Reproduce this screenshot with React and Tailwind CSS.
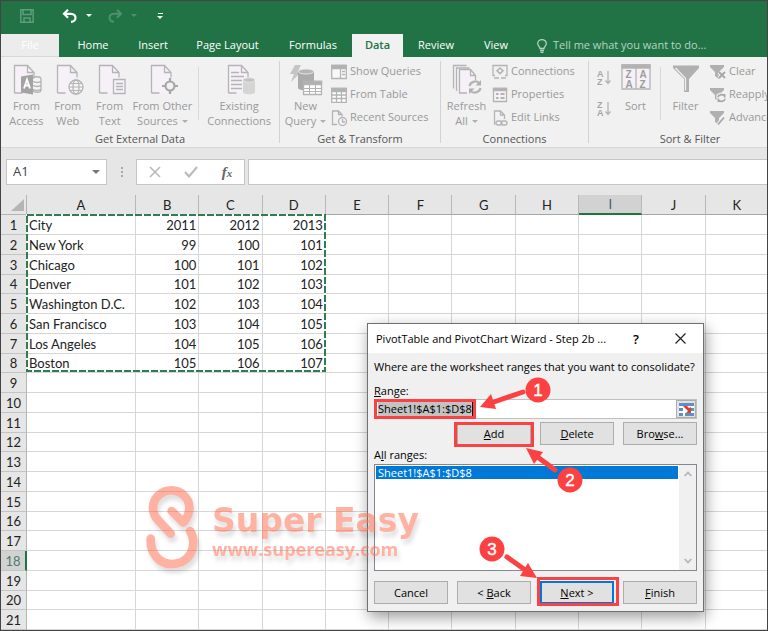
import React from 'react';

const columns = ['A', 'B', 'C', 'D', 'E', 'F', 'G', 'H', 'I', 'J', 'K'];

const data = [
    ['City', 2011, 2012, 2013],
    ['New York', 99, 100, 101],
    ['Chicago', 100, 101, 102],
    ['Denver', 101, 102, 103],
    ['Washington D.C.', 102, 103, 104],
    ['San Francisco', 103, 104, 105],
    ['Los Angeles', 104, 105, 106],
    ['Boston', 105, 106, 107],
];

const ROW_COUNT = 21;
const ACTIVE_COLUMN = 'I';
const ACTIVE_ROW = 18;

const tabs = [
    { name: 'Home', width: 'w-16' },
    { name: 'Insert', width: 'w-14' },
    { name: 'Page Layout', width: 'w-[93px]' },
    { name: 'Formulas', width: 'w-[78px]' },
    { name: 'Data', width: 'w-[51px]' },
    { name: 'Review', width: 'w-[66px]' },
    { name: 'View', width: 'w-[54px]' },
];

/* ---------- icons ---------- */

const Icon = ({ w, h, children }) => (
    <svg width={w} height={h} viewBox={`0 0 ${w} ${h}`} fill="none" stroke="#b4b4b4" strokeWidth="1.3" className="shrink-0" aria-hidden="true">
        {children}
    </svg>
);

const Page = () => (
    <>
        <path d="M1.5 1.5h13l6.500 7v20.500h-19.500z" fill="#f6f1f8" stroke="none" />
        <path d="M1.500 29v-27.500h13l6.500 7v5M14.500 1.500v7h6.500M1.500 29h8" />
    </>
);

const AccessIcon = () => (
    <Icon w={30} h={31}>
        <Page />
        <path d="M20 15c0-3 8-3 8 0v11c0 3-8 3-8 0M20 17c1 2 7 2 8 0M20 21c1 2 7 2 8 0M20 25c1 2 7 2 8 0" fill="#f4f4f4" />
        <path d="M8 12.500l12-2v20l-12-2z" fill="#a3a3a3" stroke="none" />
        <path d="M11 24.500l3-9 3 9M12 21.500h4" stroke="#fff" strokeWidth="1.800" />
    </Icon>
);

const WebIcon = () => (
    <Icon w={28} h={31}>
        <Page />
        <circle cx="20" cy="23" r="7" fill="#f4f4f4" />
        <ellipse cx="20" cy="23" rx="3" ry="7" />
        <path d="M13 23h14M14 19.500h12M14 26.500h12" strokeWidth="1" />
    </Icon>
);

const TextIcon = () => (
    <Icon w={28} h={31}>
        <Page />
        <path d="M15.500 15.500h11.500v14h-11.500z" fill="#f6f1f8" />
        <path d="M18 19.500h7M18 22.500h7M18 25.500h7" />
    </Icon>
);

const OtherIcon = () => (
    <Icon w={28} h={31}>
        <Page />
        <circle cx="20" cy="22" r="4.500" fill="#f1f1f1" stroke="#a6a6a6" strokeWidth="2.200" />
        <path d="M20 14v4M20 26v4M12 22h4M24 22h4" stroke="#a6a6a6" strokeWidth="2.200" />
    </Icon>
);

const ExistingIcon = () => (
    <Icon w={28} h={31}>
        <Page />
        <path d="M4 8.500h8M4 12.500h13M4 16.500h11M4 20.500h11M4 24.500h11" />
        <path d="M16 16v12c0 3 12 3 12 0v-12c0-3-12-3-12 0z" fill="#d5d5d5" stroke="none" />
        <ellipse cx="22" cy="16" rx="6" ry="2.200" fill="#c3c3c3" stroke="#f1f1f1" strokeWidth=".6" />
    </Icon>
);

const QueryIcon = () => (
    <Icon w={34} h={34}>
        <path d="M6 1h6l-3 6h4l-11 11 3-8h-4z" fill="#c4c4c4" stroke="none" />
        <path d="M9 8v16c0 3 16 3 16 0v-16c0-4-16-4-16 0z" fill="#ababab" stroke="none" />
        <ellipse cx="17" cy="7.500" rx="7.500" ry="2.500" fill="#b5b5b5" stroke="#f1f1f1" strokeWidth=".8" />
        <path d="M14.500 17.500h18v13h-18z" fill="#fff" />
        <path d="M14.500 17.500h18v3h-18z" fill="#b0b0b0" />
        <path d="M14.500 24.500h18M20.500 20v10M26.500 20v10M14.500 27.500h18" strokeWidth="1" />
    </Icon>
);

const RefreshIcon = () => (
    <Icon w={30} h={32}>
        <path d="M1.500 24.500v-23h13M4.500 27v-23h13" />
        <path d="M7.500 5.500h11l6 6v17h-17z" fill="#f6f1f8" stroke="none" />
        <path d="M15 29h-7.500v-23.500h11l5 6v5M18.500 5.500v6h5" />
        <circle cx="23" cy="23" r="7" fill="#f1f1f1" stroke="none" />
        <path d="M17.500 22c1-5 8-6 10-2.500M28.500 24c-1 5-8 6-10 2.500" strokeWidth="2.200" />
        <path d="M29 16v5.500h-5.500zM17 30v-5.500h5.500z" fill="#b0b0b0" stroke="none" />
    </Icon>
);

const SortIcon = () => (
    <Icon w={30} h={26}>
        <path d="M1 1h28v24h-28z" fill="#f6f1f8" />
        <path d="M1 1h28v3h-28zM15 4v21" fill="#b0b0b0" />
        <g fill="#9d9d9d" stroke="none" className="font-['Liberation_Sans'] text-[10px] font-bold">
            <text x="4.500" y="14">Z</text>
            <text x="4.500" y="24">A</text>
            <text x="18.500" y="14">A</text>
            <text x="18.500" y="24">Z</text>
        </g>
    </Icon>
);

const SortOrderIcon = ({ first, second }) => (
    <Icon w={14} h={18}>
        <g fill="#a6a6a6" stroke="none" className="font-['Liberation_Sans'] text-[9px] font-bold">
            <text x="0" y="8">{first}</text>
            <text x="0" y="16">{second}</text>
        </g>
        <path d="M11 2v12M8.500 11.500l2.500 3 2.500-3" />
    </Icon>
);

const FilterIcon = () => (
    <Icon w={28} h={30}>
        <path d="M1 1.500h26v2.500l-10 11v13h-5v-13l-11-11z" fill="#b0b0b0" stroke="none" />
        <path d="M3.500 4l10 10.500v12" stroke="#f1f1f1" />
    </Icon>
);

const SmallFilterIcon = ({ children }) => (
    <Icon w={16} h={16}>
        <path d="M0 1h14v2l-5 5v7l-4-3v-4l-5-5z" fill="#b0b0b0" stroke="none" />
        <g stroke="#f1f1f1" strokeWidth="4">{children}</g>
        <g stroke="#a6a6a6" strokeWidth="1.800">{children}</g>
    </Icon>
);

const ShowQueriesIcon = () => (
    <Icon w={16} h={16}>
        <path d="M.7 1.500h14.600v13h-14.600z" fill="#f8f8f8" />
        <path d="M.7 1.500h14.600v3h-14.600z" fill="#b0b0b0" />
        <path d="M9.500 5v9M11 7.500h3M11 10.500h3" />
    </Icon>
);

const TableIcon = () => (
    <Icon w={16} h={16}>
        <path d="M.7 1.500h14.600v14h-14.600z" fill="#fff" />
        <path d="M.7 1.500h14.600v3h-14.600z" fill="#b0b0b0" />
        <path d="M1 8h14M1 11.500h14M5.500 4v11M10.500 4v11" />
    </Icon>
);

const RecentIcon = () => (
    <Icon w={16} h={16}>
        <path d="M6 14.500h-4.500v-13.500h6l3.500 3.500v2M7.500 1v3.500h3.500" />
        <circle cx="11.500" cy="11.500" r="4" fill="#f6f1f8" />
        <path d="M11.500 9v3h2.500" />
    </Icon>
);

const ConnectionsIcon = () => (
    <Icon w={16} h={16}>
        <path d="M3 11.500h-2v-10h14v10h-2M2 14h5M9 14h5" />
        <path d="M8 4l3 2.800-3 2.800-3-2.800z" strokeWidth="1.600" />
    </Icon>
);

const PropertiesIcon = () => (
    <Icon w={16} h={16}>
        <path d="M1.500 1.500h13v13h-13z" fill="#f6f1f8" />
        <path d="M1.500 1.500h13v2h-13z" fill="#b0b0b0" />
        <path d="M4 7h2.500M4 11h2.500M8.500 7h4M8.500 11h4" strokeWidth="1.800" />
    </Icon>
);

const LinksIcon = () => (
    <Icon w={16} h={16}>
        <path d="M3.500 14h-1v-13h6l4 4v4M8.500 1v4h4" />
        <rect x="4" y="11" width="6" height="4" rx="2" />
        <rect x="9" y="11" width="6" height="4" rx="2" />
    </Icon>
);

const Caret = () => <span className="ml-1 mb-0.5 inline-block border-x-[3px] border-t-[3px] border-x-transparent border-t-[#b0b0b0]" />;

/* ---------- ribbon ---------- */

const BigButton = ({ icon, lines, width, caret }) => (
    <button className={`flex flex-col items-center pt-1 whitespace-nowrap leading-[15px] ${width}`}>
        <span className="flex h-[37px] items-start justify-center pt-[3px]">{icon}</span>
        {lines.map((line, i) => (
            <span key={line}>
                {line}
                {caret && i === lines.length - 1 && <Caret />}
            </span>
        ))}
    </button>
);

const SmallButton = ({ icon, children }) => (
    <button className="flex h-[23px] items-center gap-[3px] whitespace-nowrap">
        {icon}
        {children}
    </button>
);

const Group = ({ title, width, children }) => (
    <section className={`flex shrink-0 flex-col ${width}`}>
        <div className="flex h-[75px]">{children}</div>
        <h2 className="h-4 text-center leading-4 text-[#555]">{title}</h2>
    </section>
);

const GroupDivider = () => <div className="mt-1 mb-1 w-px shrink-0 bg-[#d2d2d2]" />;
const Divider = () => <div className="mt-2.5 mb-[11px] w-px shrink-0 bg-[#d9d9d9]" />;

const TitleBar = () => (
    <header className="flex h-[33px] items-center bg-[#217346] pb-1 pl-[19px]">
        <button aria-label="Save">
            <svg width="14" height="14" viewBox="0 0 14 14" fill="none" stroke="#5f9c7b" strokeWidth="1.500">
                <path d="M.8.8h12.400v12.400h-12.400zM3 1v4.500h8v-4.500M4 13v-4h6v4" />
            </svg>
        </button>
        <button aria-label="Undo" className="ml-7">
            <svg width="16" height="14" viewBox="0 0 16 14" fill="none" stroke="#fff" strokeWidth="2.200">
                <path d="M6 .8l-4 4 4 4M2 4.800h7c6 0 6 8 0 8" />
            </svg>
        </button>
        <span className="ml-2 border-x-[3px] border-t-[3px] border-x-transparent border-t-white" />
        <button aria-label="Redo" className="ml-[15px]">
            <svg width="16" height="14" viewBox="0 0 16 14" fill="none" stroke="#4f9070" strokeWidth="2">
                <path d="M10 .8l4 4-4 4M14 4.800h-7c-6 0-6 8 0 8" />
            </svg>
        </button>
        <span className="ml-2 border-x-[3px] border-t-[3px] border-x-transparent border-t-[#4f9070]" />
        <button aria-label="Customize" className="ml-5 flex flex-col items-center gap-0.5">
            <span className="h-px w-[5px] bg-white" />
            <span className="border-x-[3px] border-t-[3px] border-x-transparent border-t-white" />
        </button>
    </header>
);

const TabStrip = () => (
    <nav className="flex h-[23px] bg-[#217346] text-[11px] font-medium text-white">
        <button className="mr-0.5 w-[58px] shrink-0 border-b border-[#d8d8d8] bg-[#ececec]">File</button>
        {tabs.map((tab) => (
            <button
                key={tab.name}
                className={`shrink-0 whitespace-nowrap ${tab.width} ${tab.name === 'Data' ? 'bg-[#f1f1f1] font-semibold text-[#217346]' : ''}`}
            >
                {tab.name}
            </button>
        ))}
        <button className="ml-3.5 flex items-center gap-1.5 whitespace-nowrap text-[#b5d3c2]">
            <svg width="10" height="14" viewBox="0 0 10 14" fill="none" stroke="#b5d3c2" strokeWidth="1.300">
                <path d="M3 9.500c0-2-2.300-2.500-2.300-5a4.300 3.800 0 0 1 8.600 0c0 2.500-2.300 3-2.300 5zM3 11.500h4M3.500 13.300h3" />
            </svg>
            Tell me what you want to do...
        </button>
    </nav>
);

const Ribbon = () => (
    <div className="flex h-[91px] overflow-hidden border-b border-[#d8d8d8] bg-[#f1f1f1] text-[11px] font-medium text-[#999]">
        <Group title="Get External Data" width="w-[278px] [&_svg]:ml-1">
            <BigButton icon={<AccessIcon />} lines={['From', 'Access']} width="ml-[5px] w-[41px]" />
            <BigButton icon={<WebIcon />} lines={['From', 'Web']} width="w-[42px]" />
            <BigButton icon={<TextIcon />} lines={['From', 'Text']} width="w-[42px]" />
            <BigButton icon={<OtherIcon />} lines={['From Other', 'Sources']} width="w-16" caret />
            <div className="w-1" />
            <Divider />
            <BigButton icon={<ExistingIcon />} lines={['Existing', 'Connections']} width="w-20" />
        </Group>
        <GroupDivider />
        <Group title="Get & Transform" width="w-40">
            <BigButton icon={<QueryIcon />} lines={['New', 'Query']} width="w-[51px]" caret />
            <div className="pt-[3px]">
                <SmallButton icon={<ShowQueriesIcon />}>Show Queries</SmallButton>
                <SmallButton icon={<TableIcon />}>From Table</SmallButton>
                <SmallButton icon={<RecentIcon />}>Recent Sources</SmallButton>
            </div>
        </Group>
        <GroupDivider />
        <Group title="Connections" width="w-[147px]">
            <BigButton icon={<RefreshIcon />} lines={['Refresh', 'All']} width="w-[51px]" caret />
            <div className="pt-[3px]">
                <SmallButton icon={<ConnectionsIcon />}>Connections</SmallButton>
                <SmallButton icon={<PropertiesIcon />}>Properties</SmallButton>
                <SmallButton icon={<LinksIcon />}>Edit Links</SmallButton>
            </div>
        </Group>
        <GroupDivider />
        <Group title="Sort & Filter" width="w-[202px]">
            <div className="ml-2 flex flex-col gap-[13px] pt-3">
                <button aria-label="Sort A to Z"><SortOrderIcon first="A" second="Z" /></button>
                <button aria-label="Sort Z to A"><SortOrderIcon first="Z" second="A" /></button>
            </div>
            <BigButton icon={<SortIcon />} lines={['Sort']} width="w-[49px]" />
            <Divider />
            <BigButton icon={<FilterIcon />} lines={['Filter']} width="w-[49px]" />
            <div className="pt-[3px]">
                <SmallButton icon={<SmallFilterIcon><path d="M9 8l6 6M15 8l-6 6" /></SmallFilterIcon>}>Clear</SmallButton>
                <SmallButton icon={<SmallFilterIcon><path d="M8 10c1-3 5-3 6.500-1v-2M15 12c-1 3-5 3-6.500 1v2" /></SmallFilterIcon>}>Reapply</SmallButton>
                <SmallButton icon={<SmallFilterIcon><path d="M8 14.500l6-7" /></SmallFilterIcon>}>Advanced</SmallButton>
            </div>
        </Group>
    </div>
);

const FormulaBar = () => (
    <div className="flex h-[47px] items-start bg-[#e6e6e6] pt-[11px] pl-[5px]">
        <div className="flex h-[26px] w-[101px] items-center border border-[#c6c6c6] bg-white">
            <input aria-label="Name box" defaultValue="A1" className="w-[85px] pl-1.5 text-[13px] text-[#444] outline-none" />
            <button aria-label="Open name list" className="border-x-4 border-t-4 border-x-transparent border-t-[#777]" />
        </div>
        <div className="flex h-[26px] w-[29px] flex-col items-center justify-center gap-0.5">
            <span className="size-0.5 bg-[#a8a8a8]" />
            <span className="size-0.5 bg-[#a8a8a8]" />
            <span className="size-0.5 bg-[#a8a8a8]" />
        </div>
        <div className="flex h-[26px] w-[109px] items-center justify-around border border-[#c6c6c6] bg-white">
            <button aria-label="Cancel">
                <svg width="12" height="12" viewBox="0 0 12 12" stroke="#b9b9b9" strokeWidth="1.600"><path d="M1 1l10 10M11 1l-10 10" /></svg>
            </button>
            <button aria-label="Enter">
                <svg width="14" height="12" viewBox="0 0 14 12" fill="none" stroke="#b9b9b9" strokeWidth="2"><path d="M1 6l4 4.500 8-9.500" /></svg>
            </button>
            <button aria-label="Insert function" className="font-['Liberation_Serif'] text-[15px] leading-4 font-bold text-[#666] italic">
                f<span className="text-[11px]">x</span>
            </button>
        </div>
        <input aria-label="Formula" className="ml-[3px] h-[26px] min-w-0 flex-1 border border-r-0 border-[#c6c6c6] bg-white outline-none" />
    </div>
);

/* ---------- sheet ---------- */

const Sheet = () => (
    <div className="relative">
        {/* the last column runs under the window edge */}
        <table className="w-[calc(100%+2px)] table-fixed border-separate border-spacing-0 bg-white font-['Lato',sans-serif] text-[13px] leading-4 text-[#222]">
            <colgroup>
                <col className="w-[26px]" />
                <col className="w-[109px]" />
            </colgroup>
            <thead>
                <tr className="bg-[#e6e6e6]">
                    <th aria-label="Select all" className="h-5 border-r border-b border-[#b4b4b4] p-0">
                        <svg width="13" height="12" viewBox="0 0 13 12" className="ml-2.5"><path d="M13 0v12h-13z" fill="#b5b5b5" /></svg>
                    </th>
                    {columns.map((col) => (
                        <th
                            key={col}
                            className={`h-5 border-r border-r-[#b8b8b8] p-0 font-normal ${
                                col === ACTIVE_COLUMN ? 'border-b-2 border-b-[#217346] bg-[#d2d2d2] text-[#3f5f73]' : 'border-b border-b-[#a6a6a6]'
                            }`}
                        >
                            {col}
                        </th>
                    ))}
                </tr>
            </thead>
            <tbody>
                {Array.from({ length: ROW_COUNT }, (_, r) => (
                    <tr key={r} className="h-5 [&:nth-child(4n)]:h-[19px]">
                        <th
                            className={`border-b border-b-[#c4c4c4] p-0 font-normal ${
                                r + 1 === ACTIVE_ROW ? 'border-r-2 border-r-[#217346] bg-[#d2d2d2] text-[#4f7a6a]' : 'border-r border-r-[#b4b4b4] bg-[#e6e6e6]'
                            }`}
                        >
                            {r + 1}
                        </th>
                        {columns.map((col, c) => (
                            <td
                                key={col}
                                className={`border-r border-b border-[#d6d6d6] p-0 whitespace-nowrap ${c === 0 ? 'pl-0.5' : 'pr-0.5 text-right'}`}
                            >
                                {data[r]?.[c]}
                            </td>
                        ))}
                    </tr>
                ))}
            </tbody>
        </table>
        {/* copied range outline */}
        <svg width="300" height="160" viewBox="0 0 300 160" fill="none" className="pointer-events-none absolute top-[19px] left-[25px]">
            <rect x="1" y="1" width="298" height="156" stroke="#fff" strokeWidth="2" />
            <rect x="1" y="1" width="298" height="156" stroke="#2f7d53" strokeWidth="2" strokeDasharray="7 2" />
        </svg>
    </div>
);

/* ---------- wizard ---------- */

const DialogButton = ({ primary, className = '', children }) => (
    <button
        className={`h-[23px] bg-[#e1e1e1] text-center leading-none ${primary ? 'border-2 border-[#0078d7]' : 'border border-[#adadad]'} ${className}`}
    >
        {children}
    </button>
);

const WizardDialog = () => (
    <div
        role="dialog"
        aria-labelledby="wizard-title"
        className="absolute top-[322px] left-[366px] w-[337px] border border-[#707070] bg-[#f0f0f0] text-[11px] leading-4 font-medium text-black shadow-[2px_5px_14px_rgba(0,0,0,0.4)]"
    >
        <div className="flex h-[29px] items-center bg-white pl-2">
            <h1 id="wizard-title" className="w-[256px] whitespace-nowrap">PivotTable and PivotChart Wizard - Step 2b ...</h1>
            <button aria-label="Help" className="w-2 text-[13px] font-semibold">?</button>
            <button aria-label="Close" className="ml-[35px]">
                <svg width="11" height="11" viewBox="0 0 11 11" stroke="#222" strokeWidth="1.200"><path d="M.5.5l10 10M10.500.5l-10 10" /></svg>
            </button>
        </div>
        <div className="flex flex-col px-1.5 pt-1.5 pb-[7px]">
            <p className="whitespace-nowrap">Where are the worksheet ranges that you want to consolidate?</p>
            <label htmlFor="range" className="mt-2"><u>R</u>ange:</label>
            <div className="flex h-5 border border-[#c0c0c0] bg-white">
                <div className="flex flex-1 items-center pl-[3px]">
                    <input id="range" defaultValue="Sheet1!$A$1:$D$8" className="h-4 w-[95px] border-r border-black bg-[#c3c3c3] outline-none" />
                </div>
                <button aria-label="Collapse dialog" className="flex w-5 items-center justify-center border border-[#adadad] bg-[#e1e1e1]">
                    <svg width="15" height="13" viewBox="0 0 15 13">
                        <path d="M0 0h15v13h-15z" fill="#fff" />
                        <path d="M0 0h15v3h-15zM0 5h4v3h-4zM11 5h4v3h-4zM0 10h4v3h-4zM6 10h9v3h-9z" fill="#5b8fc9" />
                        <path d="M4 3h4l2 2 2-1v6h-5l2-2z" fill="#d8402f" />
                    </svg>
                </button>
            </div>
            <div className="mt-[3px] grid grid-cols-4 gap-[9px]">
                <DialogButton className="col-start-2"><u>A</u>dd</DialogButton>
                <DialogButton><u>D</u>elete</DialogButton>
                <DialogButton>Bro<u>w</u>se...</DialogButton>
            </div>
            <div id="all-ranges" className="mt-0.5">A<u>l</u>l ranges:</div>
            <div className="mt-px flex h-[107px] border border-[#828790] bg-white">
                <ul role="listbox" aria-labelledby="all-ranges" className="flex-1 p-px">
                    <li role="option" aria-selected="true" className="bg-[#0078d7] pl-0.5 leading-[13px] text-white">Sheet1!$A$1:$D$8</li>
                </ul>
                <div className="flex w-[17px] flex-col items-center justify-between bg-[#f0f0f0] py-1.5">
                    <button aria-label="Scroll up">
                        <svg width="8" height="6" viewBox="0 0 8 6" fill="none" stroke="#b5b5b5" strokeWidth="1.800"><path d="M.7 5l3.300-3.500 3.300 3.500" /></svg>
                    </button>
                    <button aria-label="Scroll down">
                        <svg width="8" height="6" viewBox="0 0 8 6" fill="none" stroke="#b5b5b5" strokeWidth="1.800"><path d="M.7 1l3.300 3.500 3.300-3.500" /></svg>
                    </button>
                </div>
            </div>
            <div className="mt-2.5 grid grid-cols-4 gap-[9px]">
                <DialogButton>Cancel</DialogButton>
                <DialogButton>&lt; <u>B</u>ack</DialogButton>
                <DialogButton primary><u>N</u>ext &gt;</DialogButton>
                <DialogButton><u>F</u>inish</DialogButton>
            </div>
        </div>
    </div>
);

/* ---------- overlays ---------- */

const Watermark = () => (
    <div className="pointer-events-none absolute top-[484px] left-[144px] flex items-start font-['DejaVu_Sans',sans-serif] text-[#ff6647] opacity-50 drop-shadow-[2px_5px_2px_rgba(0,0,0,0.25)]">
        <svg width="55" height="85" viewBox="45 30 165 255" fill="none" stroke="#ff6647" strokeWidth="26" strokeLinecap="round" strokeLinejoin="round">
            <path d="M125 108l35 34c12-14 18-28 18-44c0-28-24-52-54-52s-55 24-55 52c0 16 6 28 16 38l37 40" />
            <path d="M62 191c-2 44 26 76 64 76c38 0 64-28 64-66c0-14-4-24-10-33" />
        </svg>
        <div className="pt-5 pl-3 whitespace-nowrap">
            <div className="text-[33px] leading-8 font-bold">Super Easy</div>
            <div className="font-['Open_Sans',sans-serif] text-[18px] leading-6 font-bold">www.supereasy.com</div>
        </div>
    </div>
);

const steps = [
    { n: 1, cx: 171, cy: 67, line: 'M156 69L124 80', head: 'M113 84l11-13 5 15z' },
    { n: 2, cx: 203, cy: 157, line: 'M188 147L168 132', head: 'M159 125l17 4-9 12z' },
    { n: 3, cx: 125, cy: 226, line: 'M140 234L161 249', head: 'M170 255l-17-2 8-13z' },
];

const Annotations = () => (
    <svg width="270" height="290" viewBox="0 0 270 290" fill="none" stroke="#fc4142" strokeWidth="3" className="pointer-events-none absolute top-[322px] left-[366px]">
        <rect x="8.500" y="77.500" width="99" height="17" />
        <rect x="88.500" y="100.500" width="77" height="22" />
        <rect x="171.500" y="255.500" width="79" height="26" />
        {steps.map((s) => (
            <g key={s.n}>
                <path d={s.line} strokeWidth="5" strokeLinecap="round" />
                <path d={s.head} fill="#fc4142" stroke="none" />
                <circle cx={s.cx} cy={s.cy} r="12.500" fill="#fc4142" stroke="none" />
                <text x={s.cx} y={s.cy + 6} textAnchor="middle" fill="#fff" stroke="#fff" strokeWidth=".4" className="font-['Liberation_Sans'] text-[17px]">
                    {s.n}
                </text>
            </g>
        ))}
    </svg>
);

const App = () => {
    return (
        <div className="relative overflow-hidden border border-[#444] bg-[#217346] font-['Open_Sans',sans-serif]">
            <TitleBar />
            <TabStrip />
            <Ribbon />
            <FormulaBar />
            <Sheet />
            <WizardDialog />
            <Watermark />
            <Annotations />
        </div>
    );
};

export default App;
